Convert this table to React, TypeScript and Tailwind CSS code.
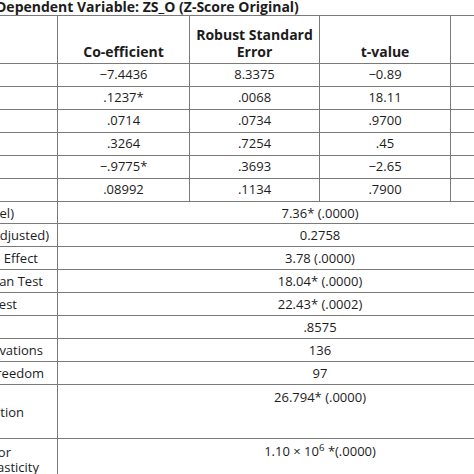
import React from "react";

const dataRows: [string, string, string, string, string][] = [
  ["Const", "−7.4436", "8.3375", "−0.89", ".3760"],
  ["LEV", ".1237*", ".0068", "18.11", ".0000"],
  ["ROA", ".0714", ".0734", ".9700", ".3336"],
  ["SIZE", ".3264", ".7254", ".45", ".6536"],
  ["TANG", "−.9775*", ".3693", "−2.65", ".0094"],
  ["GROW", ".08992", ".1134", ".7900", ".4300"],
];

type Stat = {
  lines: { text: string; pr: string }[];
  value: React.ReactNode;
  h: string;
  top?: boolean;
};

const statRows: Stat[] = [
  { lines: [{ text: "F-Test (Overall Model)", pr: "pr-[43px]" }], value: "7.36* (.0000)", h: "h-[22px]" },
  { lines: [{ text: "R-Squared (Adjusted)", pr: "pr-[8px]" }], value: "0.2758", h: "h-[23px]" },
  { lines: [{ text: "Test for Fixed Effect", pr: "pr-[19px]" }], value: "3.78 (.0000)", h: "h-[23px]" },
  { lines: [{ text: "Breusch-Pagan Test", pr: "pr-[14px]" }], value: "18.04* (.0000)", h: "h-[23px]" },
  { lines: [{ text: "Hausman Test", pr: "pr-[40px]" }], value: "22.43* (.0002)", h: "h-[23px]" },
  { lines: [{ text: "Rho", pr: "pr-[80px]" }], value: ".8575", h: "h-[23px]" },
  { lines: [{ text: "No. of Observations", pr: "pr-[14px]" }], value: "136", h: "h-[23px]" },
  { lines: [{ text: "Degrees of Freedom", pr: "pr-[13px]" }], value: "97", h: "h-[23px]" },
  {
    lines: [{ text: "Test for Autocorrelation", pr: "pr-[33px]" }],
    value: "26.794* (.0000)",
    h: "h-[54px]",
    top: true,
  },
];

const cols5 = "grid grid-cols-[260px_132px_130px_131px_131px]";
const cols2 = "grid grid-cols-[260px_524px]";

export default function App() {
  return (
    <div className="w-[474px] h-[474px] overflow-hidden bg-white text-[#1c1c1c] font-['Open_Sans',sans-serif]">
      <div className="h-[16px] -ml-[4px] text-[14px] leading-[16px] font-bold whitespace-nowrap -mt-[1px]">
        Dependent Variable: ZS_O (Z-Score Original)
      </div>
      <div className="-ml-[202px] w-[784px] border-t border-[#7a7a7a] text-[13px]">
        <div className={`${cols5} h-[48px] border-b border-[#7a7a7a] font-bold text-[14px] leading-[17px]`}>
          <div className="border-r border-[#7a7a7a] flex items-end justify-center pb-[3px]">
            <div className="pr-[80px]">Variables</div>
          </div>
          <div className="border-r border-[#7a7a7a] flex items-end justify-center pb-[3px]">
            <div>Co-efficient</div>
          </div>
          <div className="border-r border-[#7a7a7a] flex items-end justify-center text-center pb-[3px]">
            <div>
              Robust Standard
              <br />
              Error
            </div>
          </div>
          <div className="border-r border-[#7a7a7a] flex items-end justify-center pb-[3px]">
            <div>t-value</div>
          </div>
          <div className="flex items-end justify-center pb-[3px]">
            <div>p-value</div>
          </div>
        </div>
        {dataRows.map((r, i) => (
          <div key={i} className={`${cols5} h-[23px] border-b border-[#7a7a7a]`}>
            {r.map((c, j) => (
              <div
                key={j}
                className={`flex items-center justify-center ${j < 4 ? "border-r border-[#7a7a7a]" : ""} ${j === 0 ? "pr-[80px]" : ""}`}
              >
                {c}
              </div>
            ))}
          </div>
        ))}
        {statRows.map((s, i) => (
          <div key={i} className={`${cols2} ${s.h} border-b border-[#7a7a7a] leading-[16px]`}>
            <div className="border-r border-[#7a7a7a] flex flex-col justify-center text-right whitespace-nowrap">
              {s.lines.map((l, k) => (
                <div key={k} className={l.pr}>
                  {l.text}
                </div>
              ))}
            </div>
            <div className={`flex justify-center ${s.top ? "items-start pt-[4px]" : "items-center"}`}>
              <div>{s.value}</div>
            </div>
          </div>
        ))}
        <div className={`${cols2} h-[60px] leading-[15px]`}>
          <div className="border-r border-[#7a7a7a] flex flex-col text-right whitespace-nowrap pt-[6px]">
            <div className="pr-[46px]">Modified Wald Test for</div>
            <div className="pr-[18px]">Groupwise Heteroskedasticity</div>
          </div>
          <div className="flex justify-center items-start pt-[4px] leading-[16px]">
            <div>
              1.10 × 10<sup>6</sup> *(.0000)
            </div>
          </div>
        </div>
      </div>
    </div>
  );
}
